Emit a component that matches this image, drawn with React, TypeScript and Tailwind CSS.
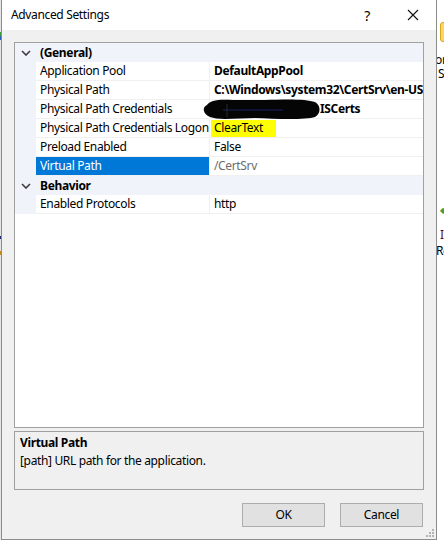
import React from "react"

const font = { fontFamily: '"Noto Sans", "Open Sans", sans-serif' }

type Prop = {
  name: string
  value: string
  bold?: boolean
  selected?: boolean
  muted?: boolean
  highlight?: boolean
  redacted?: boolean
}

const general: Prop[] = [
  { name: "Application Pool", value: "DefaultAppPool", bold: true },
  { name: "Physical Path", value: "C:\\Windows\\system32\\CertSrv\\en-US", bold: true },
  { name: "Physical Path Credentials", value: "ISCerts", bold: true, redacted: true },
  { name: "Physical Path Credentials Logon", value: "ClearText", highlight: true },
  { name: "Preload Enabled", value: "False" },
  { name: "Virtual Path", value: "/CertSrv", selected: true, muted: true },
]

const behavior: Prop[] = [{ name: "Enabled Protocols", value: "http" }]

function Chevron() {
  return (
    <svg width="10" height="6" viewBox="0 0 10 6" className="mt-px">
      <path d="M1 1 L5 5 L9 1" fill="none" stroke="#3c3c3c" strokeWidth="1.6" />
    </svg>
  )
}

function CategoryRow({ label }: { label: string }) {
  return (
    <div className="flex h-[19px] items-center bg-[#f0f4fa]">
      <div className="flex w-[21px] justify-center">
        <Chevron />
      </div>
      <span className="pl-[4px] font-bold">{label}</span>
    </div>
  )
}

function Redaction() {
  // scribbled-out black marker over the credentials value
  return (
    <svg width="118" height="21" viewBox="0 0 118 21" className="absolute top-[-1px] left-[188px]">
      <path
        d="M4 6 C7 1 16 0 30 1 L62 1 C84 0 104 0 112 3 C118 6 118 15 112 18 C102 21 74 20 52 19 L22 20 C9 20 2 17 1 12 C0 9 2 7 4 6 Z"
        fill="#050505"
      />
      <path d="M20 11 L80 11" stroke="#1e2a78" strokeWidth="0.8" />
      <path d="M24 5 L24 18" stroke="#2a2a2a" strokeWidth="1" />
    </svg>
  )
}

function PropRow({ p }: { p: Prop }) {
  return (
    <div className="relative flex h-[19px]">
      <div className="w-[21px] bg-[#f0f4fa]" />
      <div className="flex w-[174px] border-r border-b border-[#f0f0f0] bg-white">
        <div
          className={
            p.selected
              ? "flex h-[18px] w-full items-center bg-[#0078d7] pl-[4px] text-white"
              : "flex h-[18px] w-full items-center pl-[4px]"
          }
        >
          <span className="whitespace-nowrap">{p.name}</span>
        </div>
      </div>
      <div className="flex flex-1 items-center overflow-hidden border-b border-[#f0f0f0] bg-white pl-[4px]">
        {p.redacted ? (
          <span className="ml-[106px] whitespace-nowrap font-bold">{p.value}</span>
        ) : p.highlight ? (
          <span className="-ml-[3px] flex h-[17px] items-center bg-[#ffff00] pr-[13px] pl-[3px] whitespace-nowrap">
            {p.value}
          </span>
        ) : (
          <span
            className={
              (p.bold ? "font-bold " : "") + (p.muted ? "text-[#6d6d6d] " : "") + "whitespace-nowrap"
            }
          >
            {p.value}
          </span>
        )}
      </div>
      {p.redacted && <Redaction />}
    </div>
  )
}

function ResizeGrip() {
  return (
    <svg width="8" height="8" viewBox="0 0 8 8">
      <rect x="6" y="0" width="2" height="2" fill="#b4b4b4" />
      <rect x="3" y="3" width="2" height="2" fill="#b4b4b4" />
      <rect x="6" y="3" width="2" height="2" fill="#b4b4b4" />
      <rect x="0" y="6" width="2" height="2" fill="#b4b4b4" />
      <rect x="3" y="6" width="2" height="2" fill="#b4b4b4" />
      <rect x="6" y="6" width="2" height="2" fill="#b4b4b4" />
    </svg>
  )
}

export default function App() {
  return (
    <div
      className="flex h-[540px] w-[444px] overflow-hidden bg-white text-[12px] tracking-[-0.35px] text-black"
      style={font}
    >
      {/* background window sliver on the left */}
      <div className="flex w-px flex-col bg-[#e4e4e4]">
        <div className="mt-[32px] h-[4px] bg-[#3c9c3c]" />
        <div className="h-[4px] bg-[#2a5cb0]" />
        <div className="mt-[196px] h-[3px] bg-[#1e2a78]" />
        <div className="mt-[12px] h-[4px] bg-[#c88a18]" />
      </div>

      {/* dialog */}
      <div className="flex w-[436px] flex-col border-x border-b border-[#8c8c8c] bg-[#f0f0f0]">
        <div className="flex h-[30px] shrink-0 items-center bg-white pl-[9px]">
          <span className="flex-1">Advanced Settings</span>
          <span className="mr-[37px] text-[14px]">?</span>
          <svg width="12" height="12" viewBox="0 0 12 12" className="mr-[17px]">
            <path d="M1 1 L11 11 M11 1 L1 11" stroke="#111" strokeWidth="1.1" />
          </svg>
        </div>

        <div className="flex flex-1 flex-col px-[12px] pt-[12px]">
          <div className="flex h-[386px] flex-col border border-[#a0a0a0] bg-white">
            <CategoryRow label="(General)" />
            {general.map((p) => (
              <PropRow key={p.name} p={p} />
            ))}
            <CategoryRow label="Behavior" />
            {behavior.map((p) => (
              <PropRow key={p.name} p={p} />
            ))}
          </div>

          <div className="mt-[3px] flex h-[59px] flex-col border border-[#a0a0a0] pl-[5px] pt-[2px]">
            <span className="font-bold leading-[18px]">Virtual Path</span>
            <span className="leading-[18px]">[path] URL path for the application.</span>
          </div>

          <div className="mt-[13px] flex justify-end gap-[15px] pr-px">
            <button className="h-[24px] w-[83px] border border-[#adadad] bg-[#e1e1e1]">OK</button>
            <button className="h-[24px] w-[83px] border border-[#adadad] bg-[#e1e1e1]">Cancel</button>
          </div>

          <div className="mt-auto flex justify-end pb-[2px]">
            <div className="-mr-[10px]">
              <ResizeGrip />
            </div>
          </div>
        </div>
      </div>

      {/* background window sliver on the right */}
      <div className="flex flex-1 flex-col overflow-hidden bg-white text-[12px]">
        <div className="mt-[22px] ml-[3px] h-[20px] w-[8px] rounded-l-[3px] border border-[#d9a520] bg-[#ffd75e]" />
        <span className="-ml-[2px] mt-[12px] leading-[12px]">or</span>
        <span className="ml-[1px] mt-px leading-[14px]">S</span>
        <span className="ml-[3px] mt-[125px] text-[8px] leading-[8px] text-[#3ca03c]">◆</span>
        <span className="ml-[3px] mt-[14px] leading-[14px] text-[#5a0a14]">I</span>
        <span className="-ml-[1px] mt-[2px] leading-[14px]">Re</span>
      </div>
    </div>
  )
}
